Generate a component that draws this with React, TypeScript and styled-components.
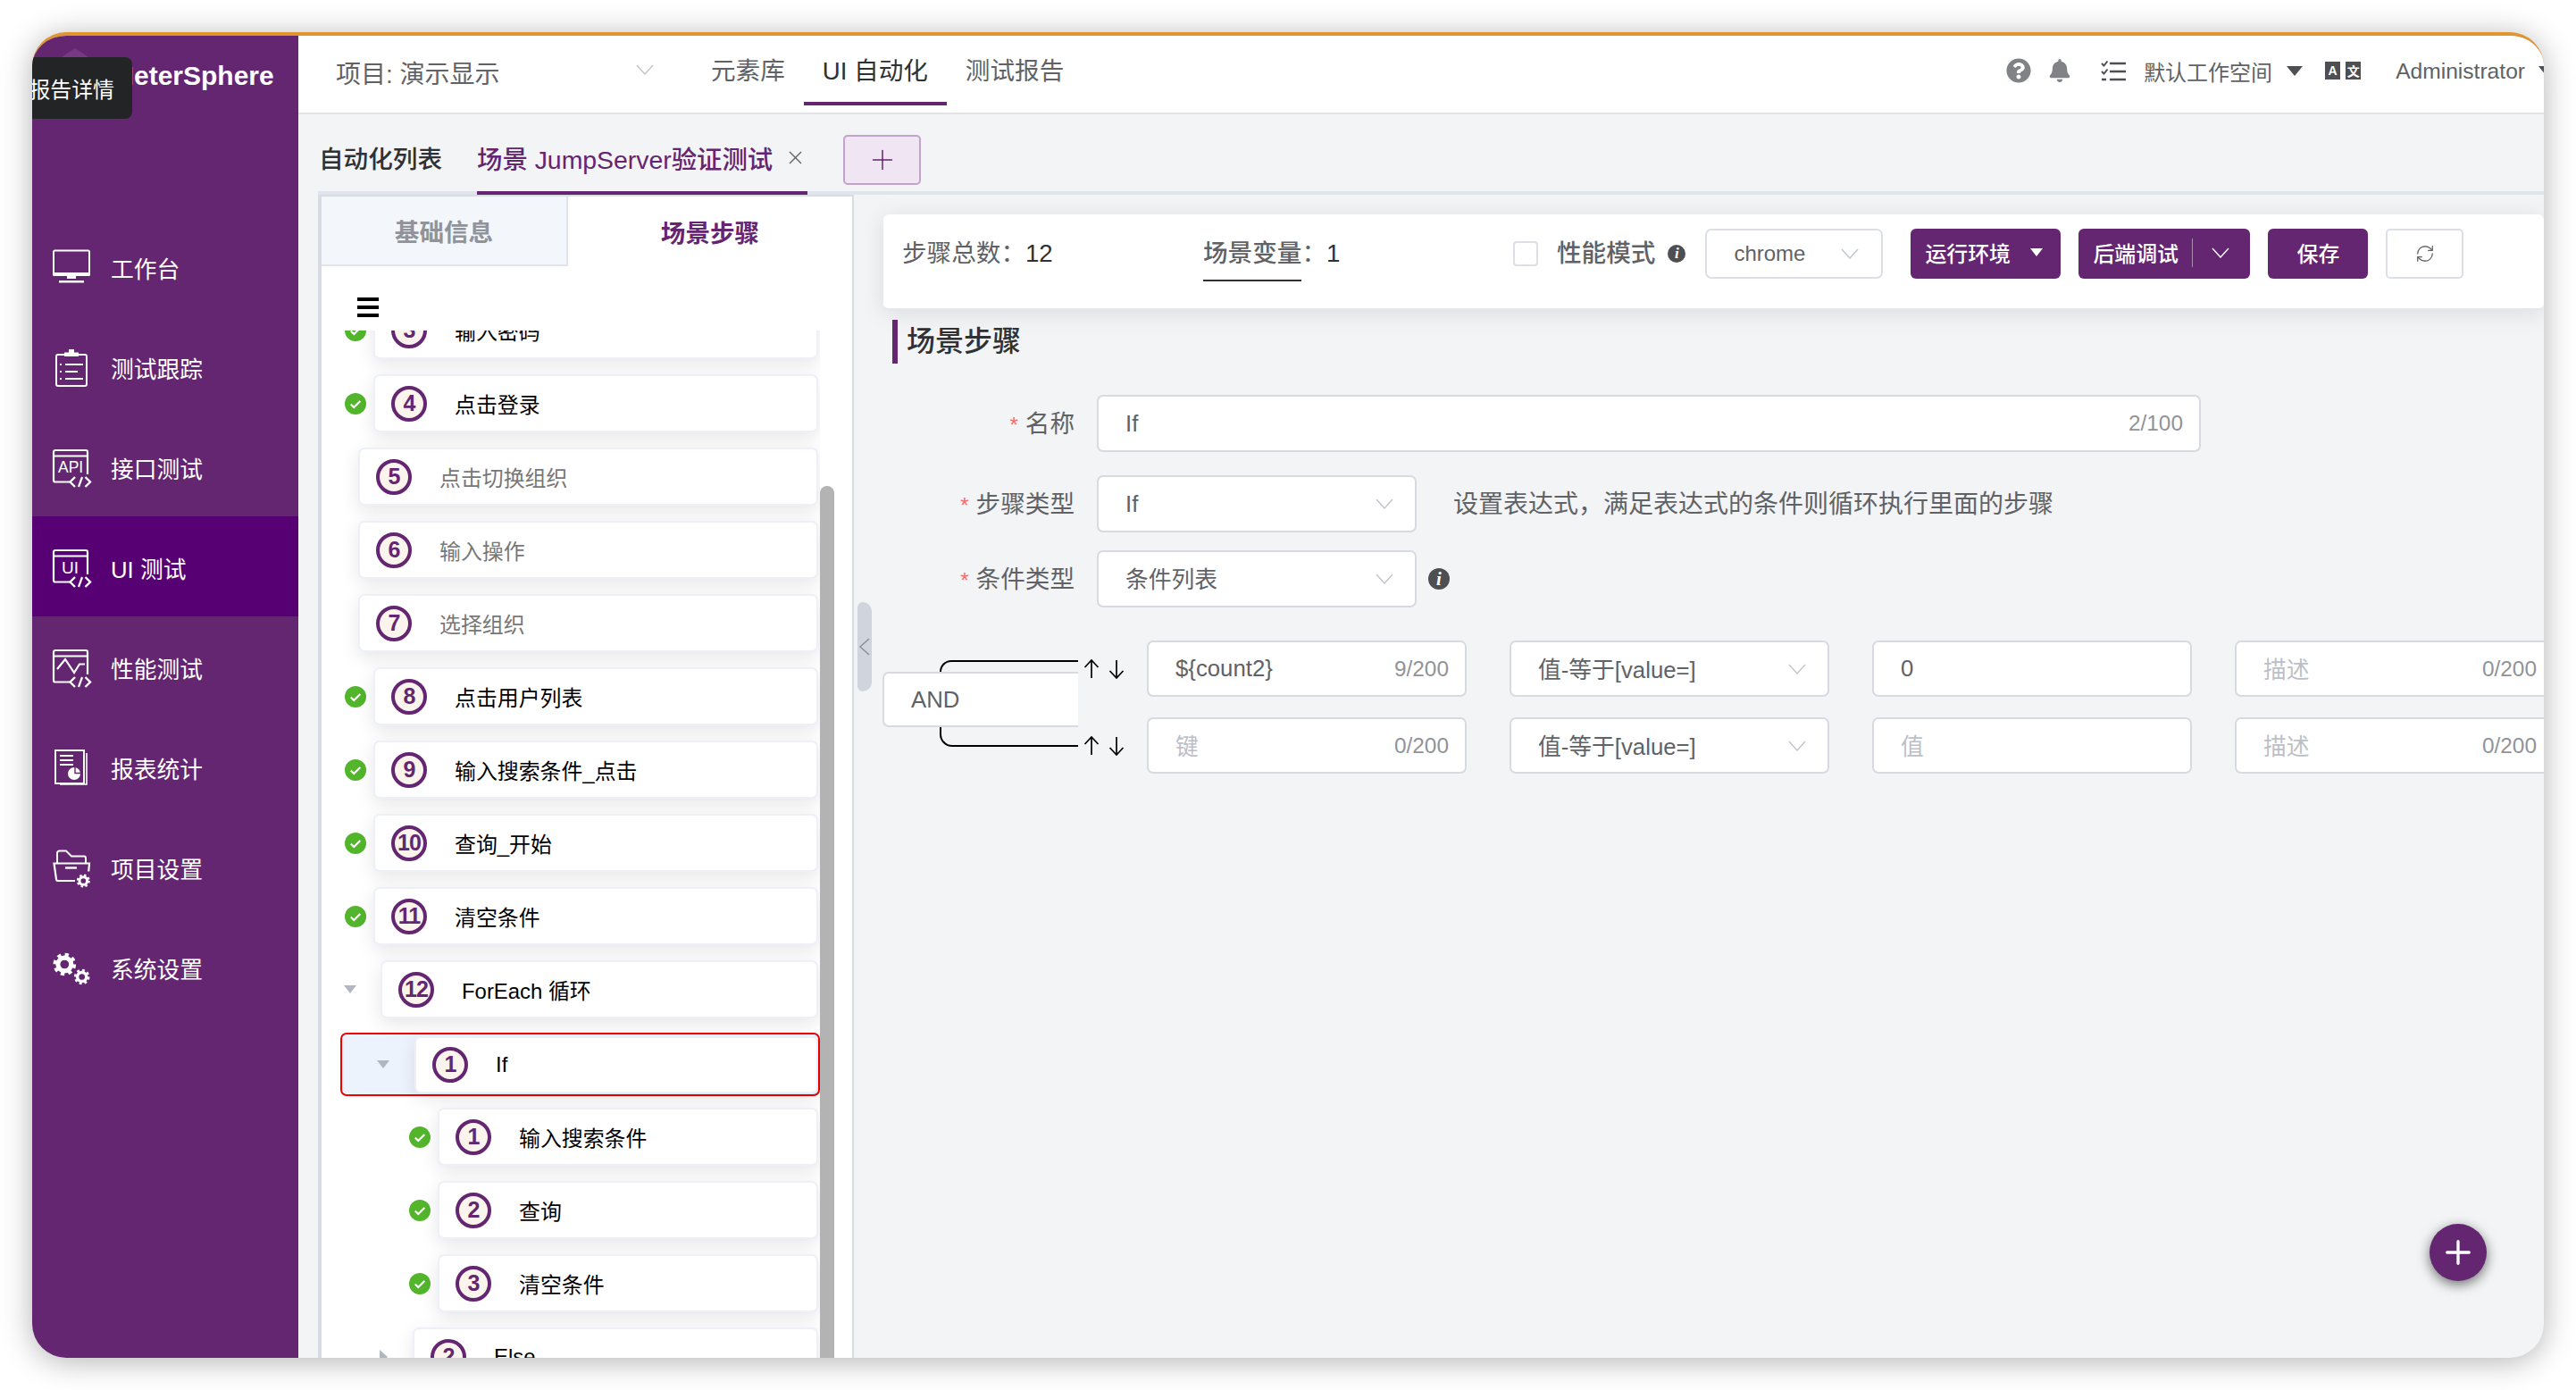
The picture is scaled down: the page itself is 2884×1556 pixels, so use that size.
import styled, { createGlobalStyle } from 'styled-components';
import { Plus, RefreshCw } from 'lucide-react';
import { FaBell, FaQuestionCircle } from 'react-icons/fa';

const purple = '#642571';
const line = '#d9dce4';

const GlobalStyle = createGlobalStyle`
  html, body {
    margin: 0;
    background: #fff;
  }
  * {
    box-sizing: border-box;
  }
  body {
    font-family: "Liberation Sans", "Noto Sans CJK SC", sans-serif;
    color: #303133;
  }
`;

const Page = styled.div`
  width: 2884px;
  height: 1556px;
  padding: 36px;
  overflow: hidden;
`;

const Window = styled.div`
  display: flex;
  height: 1484px;
  border-top: 4px solid #e0952f;
  border-radius: 38px;
  overflow: hidden;
  background: #f3f4f6;
  box-shadow: 0 4px 34px rgba(0, 0, 0, 0.3);
`;

/* sidebar */
const Sidebar = styled.aside`
  position: relative;
  flex: 0 0 298px;
  background: ${purple};
  overflow: hidden;
`;

const Logo = styled.div`
  display: flex;
  height: 202px;
  padding: 21px 0 0 89px;
  font-size: 30px;
  line-height: 48px;
  font-weight: 700;
  color: #fff;
`;

const LogoPeak = styled.span`
  position: absolute;
  top: 14px;
  left: 30px;
  border-left: 18px solid transparent;
  border-right: 18px solid transparent;
  border-bottom: 12px solid #763a82;
`;

const Tooltip = styled.div`
  position: absolute;
  top: 24px;
  left: 0;
  display: flex;
  align-items: center;
  justify-content: flex-end;
  width: 112px;
  height: 69px;
  padding-right: 20px;
  border-radius: 0 8px 8px 0;
  background: #232426;
  color: #fff;
  font-size: 23.9px;
  white-space: nowrap;
`;

const NavItem = styled.div<{ $active?: boolean }>`
  display: flex;
  align-items: center;
  gap: 23px;
  height: 112px;
  padding: 3px 0 0 23px;
  background: ${p => (p.$active ? '#570074' : 'transparent')};
  color: #fff;
  font-size: 25.76px;
`;

const NavGlyph = styled.svg.attrs({ viewBox: '0 0 42 42', width: 42, height: 42 })`
  flex: none;
  fill: none;
  stroke: #fff;
  stroke-width: 2;
  overflow: visible;

  text {
    fill: #fff;
    stroke: none;
    font-family: "Liberation Sans", sans-serif;
  }
`;

const CodeFrame = () => (
  <>
    <path d="M20 36.5H3a2 2 0 0 1-2-2V3a2 2 0 0 1 2-2h34a2 2 0 0 1 2 2v25" strokeWidth="2.2" />
    <path d="M1 7.5h38" />
    <polyline points="25,31 19.5,36.5 25,42" strokeWidth="2.4" />
    <path d="M33 31l-4 11" strokeWidth="2.2" />
    <polyline points="36.5,31 42,36.5 36.5,42" strokeWidth="2.4" />
  </>
);

const Gear = ({ cx, cy, r }: { cx: number; cy: number; r: number }) => {
  const outer = r * 0.86;
  const dash = (2 * Math.PI * outer) / 16;
  return (
    <g>
      <circle cx={cx} cy={cy} r={r * 0.58} strokeWidth={r * 0.4} />
      <circle cx={cx} cy={cy} r={outer} strokeWidth={r * 0.28} strokeDasharray={`${dash} ${dash}`} />
    </g>
  );
};

const navIcons = [
  <NavGlyph key="desk">
    <path d="M1 26V3a1.5 1.5 0 0 1 1.5-1.5h37A1.5 1.5 0 0 1 41 3v23" />
    <path d="M0 26h42v2.5a1.5 1.5 0 0 1-1.5 1.5h-39A1.5 1.5 0 0 1 0 28.500z" fill="#fff" stroke="none" />
    <path d="M16 30h10v3H16zM7 35h28v2.500H7z" fill="#fff" stroke="none" />
  </NavGlyph>,
  <NavGlyph key="track">
    <path d="M13 6H6a2 2 0 0 0-2 2v31a2 2 0 0 0 2 2h30a2 2 0 0 0 2-2V8a2 2 0 0 0-2-2h-7" />
    <path d="M13 8V3.500h5V0h6v3.500h5V8z" fill="#fff" stroke="none" />
    <path d="M8 17h2M14 17h20M8 25h2M14 25h14M8 33h2M14 33h20" />
  </NavGlyph>,
  <NavGlyph key="api">
    <CodeFrame />
    <text x="6" y="26" fontSize="17.5" fontWeight="500">API</text>
  </NavGlyph>,
  <NavGlyph key="ui">
    <CodeFrame />
    <text x="10" y="27" fontSize="19" fontWeight="500">UI</text>
  </NavGlyph>,
  <NavGlyph key="perf">
    <CodeFrame />
    <polyline points="5,22 14,11 24,26 30,16.500 36,16.500" strokeWidth="2.2" />
  </NavGlyph>,
  <NavGlyph key="report">
    <rect x="3" y="1" width="32" height="37" strokeWidth="2" />
    <path d="M38 4v35H8" strokeWidth="1.6" />
    <path d="M8 7h15M8 12h15M8 17h15" />
    <circle cx="24" cy="27" r="7" fill="#fff" stroke="none" />
    <path d="M25 20v6.500h7" stroke={purple} strokeWidth="1.4" />
  </NavGlyph>,
  <NavGlyph key="project">
    <path d="M25 35H6a2 2 0 0 1-2-2L1.500 15.500H41l-.8 9" strokeWidth="2.2" />
    <path d="M5 15V4a2.500 2.500 0 0 1 2.500-2.500H15l6 6h14a2 2 0 0 1 2 2V15" strokeWidth="2" />
    <path d="M14 20.500h13" strokeWidth="2.4" />
    <Gear cx={34.3} cy={35} r={7.5} />
  </NavGlyph>,
  <NavGlyph key="system">
    <Gear cx={13.3} cy={16.5} r={12.8} />
    <Gear cx={32.7} cy={30.5} r={8.8} />
  </NavGlyph>,
];

const navItems = ['工作台', '测试跟踪', '接口测试', 'UI 测试', '性能测试', '报表统计', '项目设置', '系统设置'];

/* header */
const Main = styled.main`
  display: flex;
  flex: 1;
  flex-direction: column;
  min-width: 0;
`;

const Header = styled.header`
  display: flex;
  flex: none;
  height: 88px;
  border-bottom: 2px solid #e2e3e6;
  background: #fff;
  white-space: nowrap;
`;

const ProjectSelect = styled.div`
  display: flex;
  align-items: center;
  justify-content: space-between;
  width: 441px;
  height: 82px;
  padding: 0 43px 0 42px;
  color: #606266;
  font-size: 28px;

  svg {
    margin-top: -6px;
  }
`;

const TopNav = styled.nav`
  display: flex;
`;

const TopNavItem = styled.div<{ $active?: boolean }>`
  height: 78px;
  padding: 0 21px;
  line-height: 80px;
  font-size: 27.6px;
  color: ${p => (p.$active ? '#303133' : '#606266')};
  border-bottom: 4px solid ${p => (p.$active ? purple : 'transparent')};
`;

const HeaderRight = styled.div`
  display: flex;
  align-items: center;
  flex: none;
  height: 78px;
  margin: 0 -10px 0 auto;
  color: #606266;
  font-size: 24px;
`;

const GreyIcon = styled.span<{ $gap: number }>`
  display: flex;
  margin-right: ${p => p.$gap}px;
  color: #808285;
`;

const Caret = styled.span<{ $w?: number; $color?: string }>`
  flex: none;
  width: 0;
  height: 0;
  border-left: ${p => (p.$w ?? 16) / 2}px solid transparent;
  border-right: ${p => (p.$w ?? 16) / 2}px solid transparent;
  border-top: ${p => ((p.$w ?? 16) * 5) / 8}px solid ${p => p.$color ?? '#4d4f53'};
`;

const WorkspaceCaret = styled(Caret)`
  margin-left: 16px;
`;

const ButtonCaret = styled(Caret)`
  margin-left: 22px;
`;

const LangIcon = styled.span`
  display: flex;
  gap: 6px;
  margin: 0 39px 0 25px;
`;

const LangBox = styled.span`
  display: flex;
  align-items: center;
  justify-content: center;
  width: 17px;
  height: 20px;
  background: #4d4f53;
  color: #fff;
  font-size: 14px;
  font-weight: 700;
`;

const AdminName = styled.span`
  margin: 2px 15px 0 0;
  font-size: 24.6px;
`;

const Thin = styled.svg.attrs({ viewBox: '0 0 20 12', fill: 'none' })<{ $color?: string }>`
  flex: none;
  width: 20px;
  height: 12px;
  stroke: ${p => p.$color ?? '#c0c4cc'};
  stroke-width: 1.4;
`;

const Chevron = ({ color }: { color?: string }) => (
  <Thin $color={color}>
    <polyline points="1,1 10,11 19,1" />
  </Thin>
);

/* tabs */
const TabStrip = styled.div`
  display: flex;
  flex: none;
  align-items: stretch;
  height: 90px;
  margin-left: 22px;
  padding-left: 1px;
  border-bottom: 4px solid #dfe4ed;
  font-size: 28px;
  white-space: nowrap;
`;

const PageTab = styled.div<{ $active?: boolean }>`
  display: flex;
  flex: none;
  align-items: center;
  gap: 18px;
  height: 90px;
  margin-right: ${p => (p.$active ? 40 : 39)}px;
  padding: 10px ${p => (p.$active ? 6 : 0)}px 0 0;
  border-bottom: 4px solid ${p => (p.$active ? purple : 'transparent')};
  color: ${p => (p.$active ? purple : '#303133')};
  font-size: ${p => (p.$active ? 28.4 : 27.6)}px;
  font-weight: 500;
`;

const CloseMark = styled.svg.attrs({ viewBox: '0 0 15 15' })`
  width: 15px;
  height: 15px;
  stroke: #606266;
  stroke-width: 1.4;
`;

const AddTab = styled.div`
  display: flex;
  align-items: center;
  justify-content: center;
  align-self: flex-start;
  width: 87px;
  height: 56px;
  margin-top: 23px;
  border: 2px solid #c3a2cd;
  border-radius: 5px;
  background: #f0e6f3;
  color: ${purple};
`;

/* content */
const Content = styled.div`
  position: relative;
  display: flex;
  flex: 1;
  min-height: 0;
  margin-left: 22px;
`;

const LeftPanel = styled.section`
  position: relative;
  display: flex;
  flex: 0 0 600px;
  flex-direction: column;
  border-top: 2px solid ${line};
  border-left: 4px solid ${line};
  border-right: 2px solid ${line};
  background: #fff;
`;

const PanelTabs = styled.div`
  display: flex;
  flex: none;
  height: 78px;
`;

const PanelTab = styled.div<{ $active?: boolean }>`
  display: flex;
  align-items: center;
  justify-content: center;
  flex: ${p => (p.$active ? 1 : '0 0 276px')};
  border-bottom: ${p => (p.$active ? 'none' : '2px solid #dfe4ed')};
  border-right: ${p => (p.$active ? 'none' : '2px solid #dfe4ed')};
  background: ${p => (p.$active ? '#fff' : '#f3f6fa')};
  color: ${p => (p.$active ? purple : '#909399')};
  font-size: 27.6px;
  font-weight: 700;
`;

const MenuBars = styled.div`
  display: flex;
  flex: none;
  flex-direction: column;
  justify-content: space-between;
  width: 24px;
  height: 22px;
  margin: 35px 0 15px 40px;

  span {
    height: 4px;
    background: #000;
  }
`;

const Tree = styled.div`
  flex: 1;
  width: 558px;
  min-height: 0;
  overflow: hidden;
`;

const StepRow = styled.div<{ $pad: number; $first?: boolean }>`
  display: flex;
  align-items: center;
  height: 65px;
  margin-top: ${p => (p.$first ? -33 : 0)}px;
  margin-bottom: 17px;
  padding-left: ${p => p.$pad}px;
  padding-right: 2px;
`;

const SelectedRow = styled.div<{ $pad: number }>`
  display: flex;
  align-items: center;
  width: 537px;
  height: 71px;
  margin: -1px 0 13px 21px;
  padding-left: ${p => p.$pad}px;
  border: 2px solid #f00000;
  border-radius: 7px;
  background: #ecf3fd;
`;

const LeadSlot = styled.div<{ $w: number }>`
  display: flex;
  align-items: center;
  flex: 0 0 ${p => p.$w}px;
`;

const Triangle = styled.span<{ $dir: 'down' | 'right' }>`
  width: 0;
  height: 0;
  ${p =>
    p.$dir === 'down'
      ? `
    border-left: 7px solid transparent;
    border-right: 7px solid transparent;
    border-top: 9px solid #b2b6be;
  `
      : `
    border-top: 8px solid transparent;
    border-bottom: 8px solid transparent;
    border-left: 9px solid #b2b6be;
  `}
`;

const CheckMark = styled.svg.attrs({ viewBox: '0 0 24 24' })`
  display: block;
  width: 24px;
  height: 24px;
`;

const StepCard = styled.div<{ $muted?: boolean; $tall?: boolean }>`
  display: flex;
  align-items: center;
  flex: 1;
  height: ${p => (p.$tall ? 64 : 65)}px;
  padding-left: 18px;
  border: 2px solid #edf0f7;
  border-radius: 7px;
  background: #fff;
  box-shadow: 0 6px 20px rgba(0, 0, 0, 0.1);
  color: ${p => (p.$muted ? '#777' : '#000')};
  font-size: 23.9px;
  white-space: nowrap;
`;

const StepNumber = styled.span`
  display: flex;
  align-items: center;
  justify-content: center;
  flex: none;
  width: 40px;
  height: 40px;
  margin-right: 31px;
  border: 4px solid ${purple};
  border-radius: 50%;
  background: #fbf4ec;
  color: ${purple};
  font-size: 25px;
  font-weight: 700;
  letter-spacing: -1px;
`;

const Scrollbar = styled.div`
  position: absolute;
  top: 324px;
  bottom: 0;
  left: 558px;
  width: 16px;
  border-radius: 8px 8px 0 0;
  background: #b3b3b3;
`;

const RightPane = styled.section`
  position: relative;
  flex: 1;
  min-width: 0;
  padding: 22px 0 0 33px;
`;

const CollapseHandle = styled.div`
  position: absolute;
  top: 456px;
  left: 4px;
  display: flex;
  align-items: center;
  justify-content: center;
  width: 16px;
  height: 100px;
  border-radius: 8px 14px 14px 8px;
  background: #d0d4dc;

  svg {
    transform: rotate(90deg);
  }
`;

const Toolbar = styled.div`
  display: flex;
  align-items: center;
  height: 107px;
  padding: 0 0 18px 21px;
  border-bottom: 2px solid #e4e7ef;
  border-radius: 6px;
  background: #fff;
  box-shadow: 0 4px 26px rgba(0, 0, 0, 0.1);
  font-size: 27.6px;
  white-space: nowrap;
`;

const Stat = styled.div<{ $w: number }>`
  flex: 0 0 ${p => p.$w}px;
  padding-bottom: 5px;
  color: #303133;
`;

const StatLink = styled.span`
  padding-bottom: 14px;
  border-bottom: 2px solid #303133;
  color: #606266;
  font-weight: 500;
`;

const StatLabel = styled.span`
  color: #606266;
`;

const ModeLabel = styled.span`
  padding-bottom: 5px;
  color: #606266;
  font-weight: 500;
`;

const CheckBox = styled.span`
  flex: none;
  width: 28px;
  height: 28px;
  margin-right: 21px;
  border: 2px solid #dcdfe6;
  border-radius: 4px;
  background: #fff;
`;

const InfoDot = styled.span<{ $size: number; $left: number }>`
  display: inline-flex;
  align-items: center;
  justify-content: center;
  flex: none;
  width: ${p => p.$size}px;
  height: ${p => p.$size}px;
  margin-left: ${p => p.$left}px;
  border-radius: 50%;
  background: #4d4f53;
  color: #fff;
  font-family: "Liberation Serif", serif;
  font-size: ${p => p.$size - 3}px;
  font-style: italic;
  font-weight: 700;
`;

const ChromeSelect = styled.div`
  display: flex;
  align-items: center;
  justify-content: space-between;
  flex: none;
  width: 199px;
  height: 56px;
  margin: 0 31px 0 22px;
  padding: 0 25px 0 30px;
  border: 2px solid #dcdfe6;
  border-radius: 7px;
  background: #fff;
  color: #606266;
  font-size: 24px;
`;

const PurpleButton = styled.div<{ $w: number; $center?: boolean }>`
  display: flex;
  align-items: center;
  justify-content: ${p => (p.$center ? 'center' : 'flex-start')};
  flex: none;
  width: ${p => p.$w}px;
  height: 56px;
  margin-right: 20px;
  padding-left: ${p => (p.$center ? 0 : 16)}px;
  padding-bottom: 2px;
  border-radius: 6px;
  background: ${purple};
  color: #fff;
  font-size: 23.9px;
  font-weight: 500;
`;

const ButtonDivider = styled.span`
  flex: none;
  width: 1px;
  height: 32px;
  margin: 0 21px 0 15px;
  background: #a98bb0;
`;

const RefreshButton = styled.div`
  display: flex;
  align-items: center;
  justify-content: center;
  flex: none;
  width: 87px;
  height: 56px;
  border: 2px solid #dcdfe6;
  border-radius: 5px;
  background: #fff;
  color: #606266;
`;

const SectionTitle = styled.h2`
  height: 49px;
  margin: 11px 0 35px 10px;
  padding-left: 10px;
  border-left: 6px solid ${purple};
  color: #303133;
  font-size: 32px;
  font-weight: 500;
  line-height: 49px;
`;

const FormRow = styled.div<{ $gap: number }>`
  display: flex;
  align-items: center;
  height: 64px;
  margin-bottom: ${p => p.$gap}px;
  font-size: 27.6px;
  color: #606266;
`;

const FormLabel = styled.label`
  flex: 0 0 214px;
  margin-right: 25px;
  padding-bottom: 4px;
  text-align: right;
  font-size: 27.6px;

  &::before {
    content: '*';
    margin-right: 8px;
    color: #f56c6c;
    font-size: 24px;
  }
`;

const Field = styled.div<{ $w: number; $h?: number }>`
  display: flex;
  align-items: center;
  justify-content: space-between;
  flex: none;
  width: ${p => p.$w}px;
  height: ${p => p.$h ?? 64}px;
  padding: 0 18px 0 30px;
  border: 2px solid #d8dae2;
  border-radius: 7px;
  background: #fff;
  color: #606266;
  font-size: 25.76px;
  white-space: nowrap;
`;

const SelectField = styled(Field)`
  padding-right: 24px;
`;

const CjkValue = styled.span`
  margin-top: -3px;
`;

const Placeholder = styled.span`
  margin-top: -3px;
  color: #bcbfc7;
`;

const Counter = styled.span`
  color: #909399;
  font-size: 24.4px;
`;

const Hint = styled.span`
  margin-left: 41px;
  padding-bottom: 4px;
  font-size: 28px;
`;

const Conditions = styled.div`
  display: flex;
  margin: 37px 0 0 -1px;
`;

const LogicColumn = styled.div`
  flex: 0 0 219px;
  padding-top: 22px;
`;

const BracketTop = styled.div`
  height: 13px;
  margin-left: 64px;
  border-top: 2.500px solid #000;
  border-left: 2.500px solid #000;
  border-radius: 14px 0 0 0;
`;

const BracketBottom = styled.div`
  height: 22px;
  margin-left: 64px;
  border-bottom: 2.500px solid #000;
  border-left: 2.500px solid #000;
  border-radius: 0 0 0 14px;
`;

const LogicBox = styled.div`
  display: flex;
  align-items: center;
  height: 62px;
  padding-left: 30px;
  border: 2px solid #d8dae2;
  border-right: none;
  border-radius: 7px 0 0 7px;
  background: #fff;
  color: #606266;
  font-size: 25.76px;
`;

const ConditionRows = styled.div`
  display: flex;
  flex-direction: column;
  gap: 23px;
`;

const ConditionRow = styled.div`
  display: flex;
  align-items: center;
  gap: 48px;
`;

const MoveArrows = styled.div`
  display: flex;
  gap: 8px;
  flex: none;
  width: 77px;
  margin-right: -48px;
  padding-left: 5px;
`;

const ArrowGlyph = styled.svg.attrs({ viewBox: '0 0 20 22', fill: 'none' })`
  width: 20px;
  height: 22px;
  stroke: #000;
  stroke-width: 1.7;
`;

const ArrowUp = () => (
  <ArrowGlyph>
    <path d="M10 21V1M2.500 9L10 1l7.500 8" />
  </ArrowGlyph>
);

const ArrowDown = () => (
  <ArrowGlyph>
    <path d="M10 1v20M2.500 13l7.500 8 7.500-8" />
  </ArrowGlyph>
);

const Fab = styled.div`
  position: absolute;
  right: 64px;
  bottom: 86px;
  display: flex;
  align-items: center;
  justify-content: center;
  width: 64px;
  height: 64px;
  border-radius: 50%;
  background: ${purple};
  color: #fff;
  box-shadow: 0 4px 14px rgba(0, 0, 0, 0.55);
`;

type Step = {
  n: number;
  text: string;
  pad: number;
  lead: number;
  mark?: 'check' | 'down' | 'right';
  muted?: boolean;
};

const topSteps: Step[] = [
  { n: 3, text: '输入密码', pad: 26, lead: 32, mark: 'check' },
  { n: 4, text: '点击登录', pad: 26, lead: 32, mark: 'check' },
  { n: 5, text: '点击切换组织', pad: 41, lead: 0, muted: true },
  { n: 6, text: '输入操作', pad: 41, lead: 0, muted: true },
  { n: 7, text: '选择组织', pad: 41, lead: 0, muted: true },
  { n: 8, text: '点击用户列表', pad: 26, lead: 32, mark: 'check' },
  { n: 9, text: '输入搜索条件_点击', pad: 26, lead: 32, mark: 'check' },
  { n: 10, text: '查询_开始', pad: 26, lead: 32, mark: 'check' },
  { n: 11, text: '清空条件', pad: 26, lead: 32, mark: 'check' },
  { n: 12, text: 'ForEach 循环', pad: 25, lead: 41, mark: 'down' },
];

const subSteps: Step[] = [
  { n: 1, text: '输入搜索条件', pad: 98, lead: 32, mark: 'check' },
  { n: 2, text: '查询', pad: 98, lead: 32, mark: 'check' },
  { n: 3, text: '清空条件', pad: 98, lead: 32, mark: 'check' },
  { n: 2, text: 'Else', pad: 65, lead: 37, mark: 'right' },
];

const StepMark = ({ mark }: { mark?: Step['mark'] }) => {
  if (mark === 'check') {
    return (
      <CheckMark>
        <circle cx="12" cy="12" r="12" fill="#52b52c" />
        <path d="M6.800 12.500l3.500 3.500 7-7" fill="none" stroke="#fff" strokeWidth="2.200" />
      </CheckMark>
    );
  }
  if (mark) return <Triangle $dir={mark} />;
  return null;
};

const renderStep = (step: Step, index: number, first?: boolean) => (
  <StepRow key={`${step.n}-${step.text}-${index}`} $pad={step.pad} $first={first}>
    <LeadSlot $w={step.lead}>
      <StepMark mark={step.mark} />
    </LeadSlot>
    <StepCard $muted={step.muted}>
      <StepNumber>{step.n}</StepNumber>
      {step.text}
    </StepCard>
  </StepRow>
);

const conditionRows = [
  { key: '${count2}', keyCount: '9/200', value: '0' },
  { key: '', keyCount: '0/200', value: '' },
];

const App = () => {
  return (
    <Page>
      <GlobalStyle />
      <Window>
        <Sidebar>
          <LogoPeak />
          <Logo>MeterSphere</Logo>
          <Tooltip>报告详情</Tooltip>
          {navItems.map((name, i) => (
            <NavItem key={name} $active={i === 3}>
              {navIcons[i]}
              {name}
            </NavItem>
          ))}
        </Sidebar>
        <Main>
          <Header>
            <ProjectSelect>
              项目: 演示显示
              <Chevron />
            </ProjectSelect>
            <TopNav>
              <TopNavItem>元素库</TopNavItem>
              <TopNavItem $active>UI 自动化</TopNavItem>
              <TopNavItem>测试报告</TopNavItem>
            </TopNav>
            <HeaderRight>
              <GreyIcon $gap={19}>
                <FaQuestionCircle size={28} />
              </GreyIcon>
              <GreyIcon $gap={33}>
                <FaBell size={26} />
              </GreyIcon>
              <GreyIcon $gap={20}>
                <svg width="28" height="24" viewBox="0 0 28 24" fill="none" stroke="#4d4f53" strokeWidth="2.600">
                  <path d="M1 4l2.500 2.500L7.500 1.500M1 13l2.500 2.500 4-5" strokeWidth="2" />
                  <path d="M10 4h18M10 13h18M10 22h18M1 22h5" />
                </svg>
              </GreyIcon>
              默认工作空间
              <WorkspaceCaret $w={18} />
              <LangIcon>
                <LangBox>A</LangBox>
                <LangBox>文</LangBox>
              </LangIcon>
              <AdminName>Administrator</AdminName>
              <Caret $w={16} />
            </HeaderRight>
          </Header>
          <TabStrip>
            <PageTab>自动化列表</PageTab>
            <PageTab $active>
              场景 JumpServer验证测试
              <CloseMark>
                <path d="M1 1l13 13M14 1L1 14" />
              </CloseMark>
            </PageTab>
            <AddTab>
              <Plus size={36} strokeWidth={1} />
            </AddTab>
          </TabStrip>
          <Content>
            <LeftPanel>
              <PanelTabs>
                <PanelTab>基础信息</PanelTab>
                <PanelTab $active>场景步骤</PanelTab>
              </PanelTabs>
              <MenuBars>
                <span />
                <span />
                <span />
              </MenuBars>
              <Tree>
                {topSteps.map((step, i) => renderStep(step, i, i === 0))}
                <SelectedRow $pad={39}>
                  <LeadSlot $w={42}>
                    <Triangle $dir="down" />
                  </LeadSlot>
                  <StepCard $tall>
                    <StepNumber>1</StepNumber>
                    If
                  </StepCard>
                </SelectedRow>
                {subSteps.map((step, i) => renderStep(step, i))}
              </Tree>
              <Scrollbar />
            </LeftPanel>
            <RightPane>
              <CollapseHandle>
                <Chevron color="#8a8d94" />
              </CollapseHandle>
              <Toolbar>
                <Stat $w={337}>
                  <StatLabel>步骤总数：</StatLabel>12
                </Stat>
                <Stat $w={347}>
                  <StatLink>场景变量</StatLink>
                  <StatLabel>：</StatLabel>1
                </Stat>
                <CheckBox />
                <ModeLabel>性能模式</ModeLabel>
                <InfoDot $size={20} $left={14}>i</InfoDot>
                <ChromeSelect>
                  chrome
                  <Chevron />
                </ChromeSelect>
                <PurpleButton $w={168}>
                  运行环境
                  <ButtonCaret $w={15} $color="#fff" />
                </PurpleButton>
                <PurpleButton $w={192}>
                  后端调试
                  <ButtonDivider />
                  <Chevron color="#fff" />
                </PurpleButton>
                <PurpleButton $w={112} $center>
                  保存
                </PurpleButton>
                <RefreshButton>
                  <RefreshCw size={22} strokeWidth={1.4} />
                </RefreshButton>
              </Toolbar>
              <SectionTitle>场景步骤</SectionTitle>
              <FormRow $gap={26}>
                <FormLabel>名称</FormLabel>
                <Field $w={1236}>
                  If
                  <Counter>2/100</Counter>
                </Field>
              </FormRow>
              <FormRow $gap={20}>
                <FormLabel>步骤类型</FormLabel>
                <SelectField $w={358}>
                  If
                  <Chevron />
                </SelectField>
                <Hint>设置表达式，满足表达式的条件则循环执行里面的步骤</Hint>
              </FormRow>
              <FormRow $gap={0}>
                <FormLabel>条件类型</FormLabel>
                <SelectField $w={358}>
                  <CjkValue>条件列表</CjkValue>
                  <Chevron />
                </SelectField>
                <InfoDot $size={24} $left={13}>i</InfoDot>
              </FormRow>
              <Conditions>
                <LogicColumn>
                  <BracketTop />
                  <LogicBox>AND</LogicBox>
                  <BracketBottom />
                </LogicColumn>
                <ConditionRows>
                  {conditionRows.map(row => (
                    <ConditionRow key={row.keyCount}>
                      <MoveArrows>
                        <ArrowUp />
                        <ArrowDown />
                      </MoveArrows>
                      <Field $w={358} $h={63}>
                        {row.key || <Placeholder>键</Placeholder>}
                        <Counter>{row.keyCount}</Counter>
                      </Field>
                      <SelectField $w={358} $h={63}>
                        <CjkValue>值-等于[value=]</CjkValue>
                        <Chevron />
                      </SelectField>
                      <Field $w={358} $h={63}>
                        {row.value || <Placeholder>值</Placeholder>}
                      </Field>
                      <Field $w={358} $h={63}>
                        <Placeholder>描述</Placeholder>
                        <Counter>0/200</Counter>
                      </Field>
                    </ConditionRow>
                  ))}
                </ConditionRows>
              </Conditions>
              <Fab>
                <Plus size={42} strokeWidth={1.9} />
              </Fab>
            </RightPane>
          </Content>
        </Main>
      </Window>
    </Page>
  );
};

export default App;
